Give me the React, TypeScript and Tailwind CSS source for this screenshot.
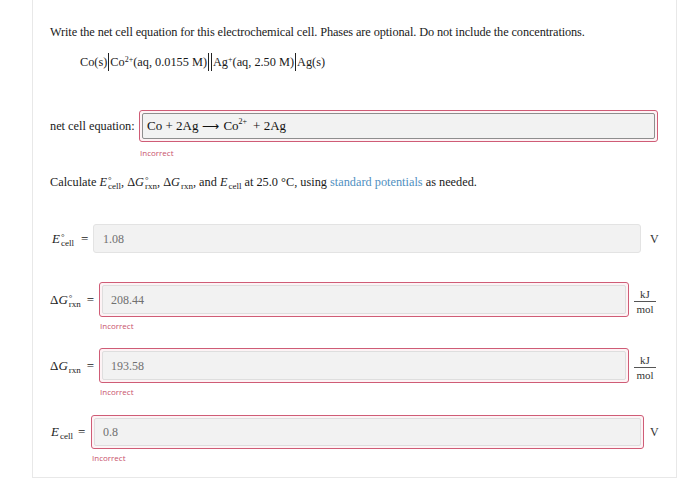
import React from 'react';

const serif = { fontFamily: '"Liberation Serif", "Times New Roman", serif' };

const Bar = () => <span className="inline-block w-px h-[18px] bg-[#222] align-middle mx-[1px]" />;

const Incorrect = ({ left }: { left: number }) => (
  <div
    className="h-[10px] leading-[10px] text-[8px] text-[#c8506b]"
    style={{ marginLeft: left, fontFamily: '"Open Sans", Arial, sans-serif' }}
  >
    Incorrect
  </div>
);

const Frac = () => (
  <span className="inline-flex flex-col items-center text-[11px] leading-[12px] text-[#333]">
    <span className="px-[1px]">kJ</span>
    <span className="w-[22px] h-px bg-[#555] my-[1px]" />
    <span>mol</span>
  </span>
);

// stacked degree sign over subscript, like the rendered math in the page
const Scr = ({ sup, sub }: { sup?: string; sub: string }) => (
  <span className="inline-block not-italic text-[9px] leading-[8px] align-[-3px] ml-[1px]">
    <span className="block h-[6px] leading-[8px]">{sup ?? ''}</span>
    <span className="block">{sub}</span>
  </span>
);

type RowProps = {
  label: React.ReactNode;
  labelWidth: number;
  boxWidth: number;
  height: number;
  value: string;
  wrong?: boolean;
  unit: React.ReactNode;
  unitGap: number;
};

const Row = ({ label, labelWidth, boxWidth, height, value, wrong, unit, unitGap }: RowProps) => (
  <div className="flex items-center" style={{ height }}>
    <div className="flex items-center text-[13px] text-[#222]" style={{ width: labelWidth }}>
      {label}
    </div>
    {wrong ? (
      <div
        className="h-full border border-[#cf5c76] rounded-[3px] p-[2px] bg-[#fdf3f5]"
        style={{ width: boxWidth }}
      >
        <div className="h-full border border-[#dedede] rounded-[2px] bg-[#f2f2f2] flex items-center pl-[8px] text-[12px] text-[#707070]">
          {value}
        </div>
      </div>
    ) : (
      <div
        className="h-full border border-[#e3e3e3] rounded-[3px] bg-[#f2f2f2] flex items-center pl-[9px] text-[12px] text-[#707070]"
        style={{ width: boxWidth }}
      >
        {value}
      </div>
    )}
    <div style={{ marginLeft: unitGap }} className="text-[12px] text-[#333]">
      {unit}
    </div>
  </div>
);

export default function App() {
  return (
    <div className="h-[482px] w-[700px] bg-white overflow-hidden" style={serif}>
      <div className="ml-[32px] w-[645px] h-[478px] border-x border-b border-[#e8e8e8] pl-[17px] pt-[23px] text-[#1a1a1a]">
        <p className="h-[18px] leading-[18px] text-[12.3px] tracking-[-0.1px]">
          Write the net cell equation for this electrochemical cell. Phases are optional. Do not include the concentrations.
        </p>
        <p className="mt-[12px] h-[18px] leading-[18px] text-[12.3px] pl-[30px] flex items-center">
          <span>Co(s)</span>
          <Bar />
          <span>
            Co<sup className="text-[8px]">2+</sup>(aq, 0.0155 M)
          </span>
          <Bar />
          <Bar />
          <span>
            Ag<sup className="text-[8px]">+</sup>(aq, 2.50 M)
          </span>
          <Bar />
          <span>Ag(s)</span>
        </p>

        <div className="mt-[39px] flex items-center h-[32px]">
          <div className="w-[89px] text-[12.3px]">net cell equation:</div>
          <div className="w-[519px] h-full border border-[#cf5c76] rounded-[3px] p-[2px] bg-[#fdf3f5]">
            <div className="h-full border border-[#8e8e8e] rounded-[2px] bg-[#f2f2f2] flex items-center pl-[4px] text-[13px] text-[#111]">
              Co + 2Ag <span className="mx-[4px] text-[12px]">⟶</span> Co<sup className="text-[8px]">2+</sup>
              <span className="ml-[6px]">+ 2Ag</span>
            </div>
          </div>
        </div>
        <div className="mt-[6px]">
          <Incorrect left={90} />
        </div>

        <p className="mt-[15px] h-[18px] leading-[18px] text-[12.3px]">
          Calculate <i>E</i>
          <Scr sup="°" sub="cell" />, Δ<i>G</i>
          <Scr sup="°" sub="rxn" />, Δ<i>G</i>
          <Scr sub="rxn" />, and <i>E</i>
          <Scr sub="cell" /> at 25.0 °C, using <span className="text-[#4f8fbf]">standard potentials</span> as needed.
        </p>

        <div className="mt-[33px]">
          <Row
            label={
              <span className="pl-[2px]">
                <i>E</i>
                <Scr sup="°" sub="cell" />
                <span className="ml-[7px]">=</span>
              </span>
            }
            labelWidth={43}
            boxWidth={548}
            height={29}
            value="1.08"
            unit="V"
            unitGap={9}
          />
        </div>

        <div className="mt-[29px]">
          <Row
            label={
              <span>
                Δ<i>G</i>
                <Scr sup="°" sub="rxn" />
                <span className="ml-[6px]">=</span>
              </span>
            }
            labelWidth={49}
            boxWidth={530}
            height={35}
            value="208.44"
            wrong
            unit={<Frac />}
            unitGap={5}
          />
        </div>
        <div className="mt-[4px]">
          <Incorrect left={50} />
        </div>

        <div className="mt-[17px]">
          <Row
            label={
              <span>
                Δ<i>G</i>
                <Scr sub="rxn" />
                <span className="ml-[6px]">=</span>
              </span>
            }
            labelWidth={49}
            boxWidth={530}
            height={35}
            value="193.58"
            wrong
            unit={<Frac />}
            unitGap={5}
          />
        </div>
        <div className="mt-[4px]">
          <Incorrect left={50} />
        </div>

        <div className="mt-[18px]">
          <Row
            label={
              <span className="pl-[1px]">
                <i>E</i>
                <Scr sub="cell" />
                <span className="ml-[5px]">=</span>
              </span>
            }
            labelWidth={41}
            boxWidth={553}
            height={34}
            value="0.8"
            wrong
            unit="V"
            unitGap={6}
          />
        </div>
        <div className="mt-[4px]">
          <Incorrect left={42} />
        </div>
      </div>
    </div>
  );
}
